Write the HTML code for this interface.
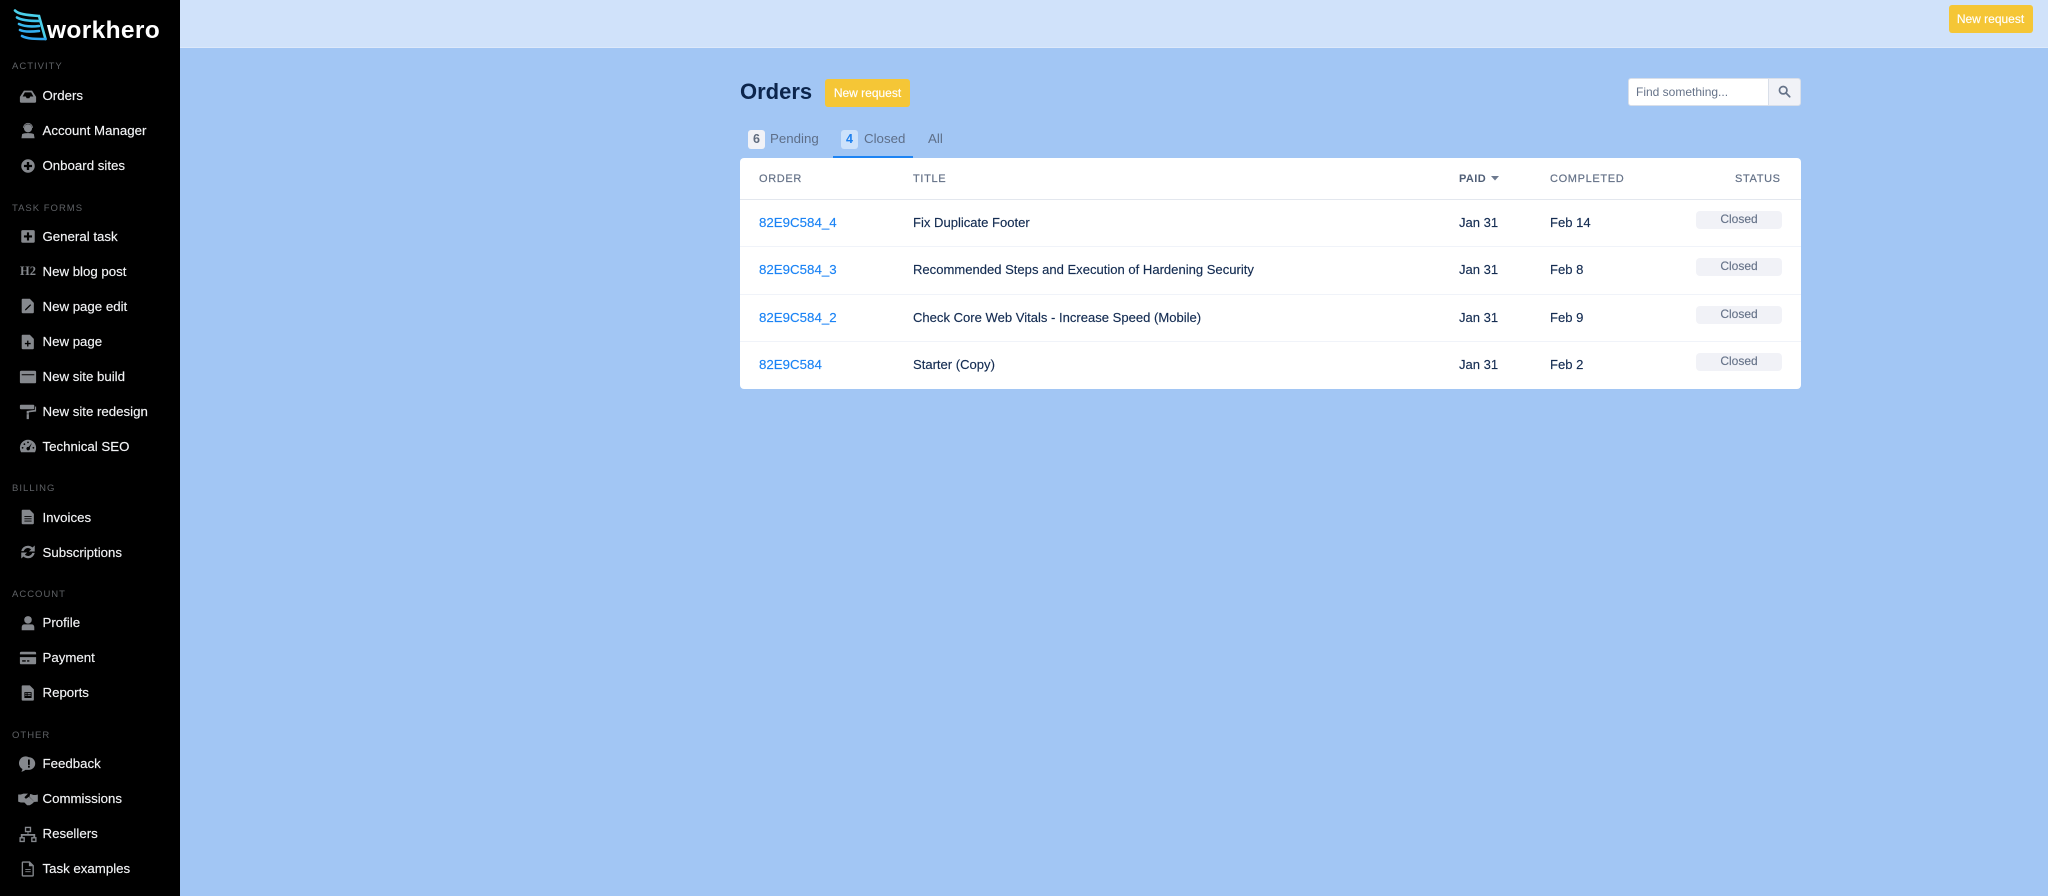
<!DOCTYPE html>
<html><head><meta charset="utf-8"><title>Orders</title>
<style>
*{box-sizing:border-box}
html,body{margin:0;padding:0;width:2048px;height:896px;overflow:hidden;background:#a2c6f4;font-family:"Liberation Sans",sans-serif}
#o{position:absolute;left:0;top:0;width:2048px;height:896px;overflow:hidden;contain:strict}
#w{position:absolute;left:0;top:0;width:2048px;height:896px;filter:blur(.35px)}
.t{position:absolute;white-space:nowrap;line-height:20px;height:20px}
#side{position:absolute;left:-8px;top:-8px;width:187.500px;height:912px;background:#000}
#sc{position:absolute;left:8px;top:8px;width:179px;height:896px}
#top{position:absolute;left:170px;top:-8px;width:1888px;height:56px;background:#d0e2fa;border-bottom:1px solid #dde9fa}
.sec{left:12px;font-size:9.500px;letter-spacing:1px;color:#5f6266;margin-top:2px}
.it{left:42.500px;font-size:13.250px;color:#f2f3f5;-webkit-text-stroke:.15px #f2f3f5}
.ic{position:absolute;left:18px;width:20px;height:20px;fill:#85888d;transform:scale(.9)}
.btn{position:absolute;background:#f5c636;color:#fff;font-size:12px;border-radius:3px;text-align:center;line-height:28px;height:28px;width:85px;-webkit-text-stroke:.15px #fff}
#card{position:absolute;left:740px;top:158px;width:1061px;height:231px;background:#fff;border-radius:4px}
.h{font-size:11px;letter-spacing:.65px;color:#647187;-webkit-text-stroke:.2px #647187;margin-top:.5px}
.c{font-size:13.050px;color:#142c52;-webkit-text-stroke:.15px #142c52}
.l{font-size:13.300px;color:#1a83f5;-webkit-text-stroke:.15px #1a83f5}
.b{position:absolute;left:1696px;width:86px;height:18px;background:#f1f2f7;border-radius:4px;color:#667389;font-size:12px;text-align:center;line-height:16px;-webkit-text-stroke:.15px #667389}
.r{position:absolute;left:740px;width:1061px;height:1px;background:#f0f3f9}
.tb{font-size:13.300px;color:#5e6f89}
</style></head><body><div id="o"><div id="w">
<div id="top"></div>
<div id="side"><div id="sc">
<svg style="position:absolute;left:12px;top:8px" width="36" height="34" viewBox="0 0 36 34" fill="none" stroke-linecap="round" stroke-width="2.600"><path stroke="#4bd0ea" d="M3 2.500C6 6 14 7 27 8L33.500 31"/><path stroke="#3fc4ec" d="M5 9.500C9 12 17 13 27 13"/><path stroke="#38b8ee" d="M7 16C11 18 18 19 27 18"/><path stroke="#32aef0" d="M8 22C12 24 18 24 27 23"/><path stroke="#2ea6f0" d="M10 28C15 31 24 31 33.500 31"/></svg>
<div class="t" style="left:47px;top:18px;height:26px;line-height:26px;font-size:24.500px;font-weight:bold;color:#fff;letter-spacing:.35px">workhero</div>

<div class="t sec" style="top:55px">ACTIVITY</div>
<svg class="ic" style="top:86px" viewBox="0 0 20 20"><path d="M5.500 4h9L19 11v5a1.500 1.500 0 0 1-1.500 1.500h-15A1.500 1.500 0 0 1 1 16v-5zM6.500 6 4 10.500h3.500l1 2h3l1-2H16L13.500 6z"/></svg>
<div class="t it" style="top:86px">Orders</div>
<svg class="ic" style="top:121px" viewBox="0 0 20 20"><circle cx="10" cy="7" r="4.500"/><path d="M4.500 6.500a5.500 5.500 0 0 1 11 0h-1a4.500 4.500 0 0 0-9 0zM3.500 13.500c2-1.500 11-1.500 13 0l.8 4.500H2.700z"/></svg>
<div class="t it" style="top:121px">Account Manager</div>
<svg class="ic" style="top:156px" viewBox="0 0 20 20"><path fill-rule="evenodd" d="M10 2.500a7.500 7.500 0 1 1 0 15 7.500 7.500 0 0 1 0-15zM8.700 5.500v3.200H5.500v2.600h3.200v3.200h2.600v-3.200h3.200V8.700h-3.200V5.500z"/></svg>
<div class="t it" style="top:156px">Onboard sites</div>

<div class="t sec" style="top:197px">TASK FORMS</div>
<svg class="ic" style="top:226px" viewBox="0 0 20 20"><path fill-rule="evenodd" d="M4 3.500h12a1.500 1.500 0 0 1 1.500 1.500v11a1.500 1.500 0 0 1-1.500 1.500H4A1.500 1.500 0 0 1 2.500 16V5A1.500 1.500 0 0 1 4 3.500zM8.800 6v3.300H5.500v2.400h3.300V15h2.400v-3.300h3.300V9.300h-3.300V6z"/></svg>
<div class="t it" style="top:226.500px">General task</div>
<div class="t" style="left:20px;top:261px;font-family:'Liberation Serif',serif;font-weight:bold;font-size:12.500px;color:#85888d">H2</div>
<div class="t it" style="top:261.500px">New blog post</div>
<svg class="ic" style="top:296px" viewBox="0 0 20 20"><path fill-rule="evenodd" d="M4 2h8l4.500 4.500V17a1 1 0 0 1-1 1H4a1 1 0 0 1-1-1V3a1 1 0 0 1 1-1zM12.500 8 7 13.500 6.500 15l1.500-.5L13.500 9z"/></svg>
<div class="t it" style="top:296.500px">New page edit</div>
<svg class="ic" style="top:332px" viewBox="0 0 20 20"><path fill-rule="evenodd" d="M4 2h8l4.500 4.500V17a1 1 0 0 1-1 1H4a1 1 0 0 1-1-1V3a1 1 0 0 1 1-1zM9 8.500v2.500H6.500v1.500H9V15h1.500v-2.500H13V11h-2.500V8.500z"/></svg>
<div class="t it" style="top:332px">New page</div>
<svg class="ic" style="top:367px" viewBox="0 0 20 20"><path fill-rule="evenodd" d="M2.500 3h15A1.500 1.500 0 0 1 19 4.500v11a1.500 1.500 0 0 1-1.500 1.500h-15A1.500 1.500 0 0 1 1 15.500v-11A1.500 1.500 0 0 1 2.500 3zM3 7v1h14V7z"/></svg>
<div class="t it" style="top:367px">New site build</div>
<svg class="ic" style="top:401px" viewBox="0 0 20 20"><path d="M2 3h14a1 1 0 0 1 1 1v3a1 1 0 0 1-1 1H2a1 1 0 0 1-1-1V4a1 1 0 0 1 1-1zM18 5h1v5.500l-8 1V13h-2.500v-3l9-1.200zM8.500 13.500H11V19H8.500z"/></svg>
<div class="t it" style="top:401.500px">New site redesign</div>
<svg class="ic" style="top:436px" viewBox="0 0 20 20"><path fill-rule="evenodd" d="M10 3a9 9 0 0 1 9 9c0 1.800-.5 3.500-1.300 5H2.300A9.500 9.500 0 0 1 1 12a9 9 0 0 1 9-9zM14.500 6.500 10.800 11a2 2 0 1 0 1.200 1zM4 11a1 1 0 1 0 0 2 1 1 0 0 0 0-2zM6 7a1 1 0 1 0 0 2 1 1 0 0 0 0-2zM10 5a1 1 0 1 0 0 2 1 1 0 0 0 0-2zM16 11a1 1 0 1 0 0 2 1 1 0 0 0 0-2z"/></svg>
<div class="t it" style="top:436.500px">Technical SEO</div>

<div class="t sec" style="top:477px">BILLING</div>
<svg class="ic" style="top:507px" viewBox="0 0 20 20"><path fill-rule="evenodd" d="M4 2h8l4.500 4.500V17a1 1 0 0 1-1 1H4a1 1 0 0 1-1-1V3a1 1 0 0 1 1-1zM6 9v1h8V9zM6 11.500v1h8v-1zM6 14v1h8v-1z"/></svg>
<div class="t it" style="top:507.500px">Invoices</div>
<svg class="ic" style="top:542px" viewBox="0 0 20 20"><path d="M10 3c2 0 3.800.8 5 2l2.500-2.200V9.500H11l2.500-2.400A5 5 0 0 0 5.200 9H2.500A7.500 7.500 0 0 1 10 3zM10 17c-2 0-3.800-.8-5-2l-2.500 2.200V10.500H9l-2.500 2.400A5 5 0 0 0 14.800 11h2.700A7.500 7.500 0 0 1 10 17z"/></svg>
<div class="t it" style="top:542.500px">Subscriptions</div>

<div class="t sec" style="top:583px">ACCOUNT</div>
<svg class="ic" style="top:613px" viewBox="0 0 20 20"><circle cx="10" cy="6.500" r="4.200"/><path d="M6 11.500h8c2 0 3 1.500 3 3.500v3H3v-3c0-2 1-3.500 3-3.500z"/></svg>
<div class="t it" style="top:613px">Profile</div>
<svg class="ic" style="top:648px" viewBox="0 0 20 20"><path fill-rule="evenodd" d="M2.500 3h15A1.500 1.500 0 0 1 19 4.500V6H1V4.500A1.500 1.500 0 0 1 2.500 3zM1 9h18v6.500a1.500 1.500 0 0 1-1.500 1.500h-15A1.500 1.500 0 0 1 1 15.500zM3.500 12.500v1.500h4v-1.500zM9 12.500v1.500h2.500v-1.500z"/></svg>
<div class="t it" style="top:648px">Payment</div>
<svg class="ic" style="top:683px" viewBox="0 0 20 20"><path fill-rule="evenodd" d="M4 1.500h8l4.500 4.500v11.500a1 1 0 0 1-1 1H4a1 1 0 0 1-1-1v-15a1 1 0 0 1 1-1zM6 9v6.500h8V9zM7 10h1.500v1H7zM9.500 10H13v1H9.500zM7 12h1.500v1H7zM9.500 12H13v1H9.500z"/></svg>
<div class="t it" style="top:683px">Reports</div>

<div class="t sec" style="top:724px">OTHER</div>
<svg class="ic" style="top:754px" viewBox="0 0 20 20"><path fill-rule="evenodd" d="M11 2.500a7 7 0 0 1 0 14H7c-1 1-2.500 1.800-4.500 2 .8-1 1.200-2 1.300-3A7 7 0 0 1 11 2.500zM10 5v6h2V5zM10 12v2h2v-2z"/></svg>
<div class="t it" style="top:754px">Feedback</div>
<svg class="ic" style="top:789px;left:17px;width:22px" viewBox="0 0 22 20"><path d="M0 5h3l3-1h5L7.500 7.500c-.8 1 .5 2.500 2 1.800L12 7.500l6 5.500-1.500 1.500-.7.600-1.500 1-1.500.8H10l-3-3H3l-3-1zM14 4.500l3 1h2.500L22 5v8h-2.500l-1 .5-6-6 1-3z"/></svg>
<div class="t it" style="top:789px">Commissions</div>
<svg class="ic" style="top:824px;left:17px;width:22px" viewBox="0 0 22 20"><path fill-rule="evenodd" d="M7.500 2h7v6h-3v2H19v3.500h1.500V19h-6v-5.500H17V12H5v1.500h2.500V19h-6v-5.500H3V10h7.500V8h-3zM9 3.500v3h4v-3zM3 15v2.500h3V15zM16 15v2.500h3V15z"/></svg>
<div class="t it" style="top:823.500px">Resellers</div>
<svg class="ic" style="top:859px" viewBox="0 0 20 20"><path fill-rule="evenodd" d="M4.500 1.500H12l4.500 4.500v11a1.500 1.500 0 0 1-1.500 1.500H4.500A1.500 1.500 0 0 1 3 17V3a1.500 1.500 0 0 1 1.500-1.500zM4.500 3v14H15V7h-4V3zM7 10h6v1H7zM7 12.500h6v1H7z"/></svg>
<div class="t it" style="top:859px">Task examples</div>
</div></div>

<div class="btn" style="left:1948.500px;top:5px;width:84px">New request</div>

<div class="t" style="left:740px;top:80px;height:24px;line-height:24px;font-size:22px;font-weight:bold;color:#0c254c">Orders</div>
<div class="btn" style="left:825px;top:79px">New request</div>

<div style="position:absolute;left:748px;top:130px;width:17px;height:19px;background:#f1f2f7;border-radius:3px;color:#5f6b7e;font-size:12.500px;font-weight:bold;text-align:center;line-height:19px">6</div>
<div class="t tb" style="left:770px;top:129px">Pending</div>
<div style="position:absolute;left:841px;top:130px;width:17px;height:19px;background:#cde2fb;border-radius:3px;color:#1e80ee;font-size:12.500px;font-weight:bold;text-align:center;line-height:19px">4</div>
<div class="t tb" style="left:864px;top:129px">Closed</div>
<div class="t tb" style="left:928px;top:129px">All</div>
<div style="position:absolute;left:833px;top:156px;width:80px;height:2px;background:#1e84f3"></div>

<div style="position:absolute;left:1628px;top:78px;width:141px;height:28px;background:#fff;border:1px solid #d9dfe9;border-radius:3px 0 0 3px"></div>
<div class="t" style="left:1636px;top:82px;font-size:12px;color:#667389">Find something...</div>
<div style="position:absolute;left:1768px;top:78px;width:33px;height:28px;background:#f1f2f7;border:1px solid #d9dfe9;border-radius:0 3px 3px 0"></div>
<svg style="position:absolute;left:1778px;top:85px" width="13" height="13" viewBox="0 0 15 15" fill="none" stroke="#667389" stroke-width="2"><circle cx="6" cy="6" r="4.300"/><path stroke-linecap="round" d="M9.500 9.500l4 4"/></svg>

<div id="card"></div>
<div class="r" style="top:199px;background:#e3e7ee"></div>
<div class="r" style="top:246px"></div>
<div class="r" style="top:294px"></div>
<div class="r" style="top:341px"></div>

<div class="t h" style="left:759px;top:168px">ORDER</div>
<div class="t h" style="left:913px;top:168px">TITLE</div>
<div class="t h" style="left:1459px;top:168px;color:#4f5e76;font-weight:bold;letter-spacing:.4px;-webkit-text-stroke:0">PAID</div>
<svg style="position:absolute;left:1491px;top:176px" width="8" height="5"><path d="M0 0h8L4 4.500z" fill="#6d7a8f"/></svg>
<div class="t h" style="left:1550px;top:168px">COMPLETED</div>
<div class="t h" style="left:1735px;top:168px">STATUS</div>

<div class="t l" style="left:759px;top:213px">82E9C584_4</div>
<div class="t c" style="left:913px;top:213px">Fix Duplicate Footer</div>
<div class="t c" style="left:1459px;top:213px">Jan 31</div>
<div class="t c" style="left:1550px;top:213px">Feb 14</div>
<div class="b" style="top:211px">Closed</div>

<div class="t l" style="left:759px;top:260px">82E9C584_3</div>
<div class="t c" style="left:913px;top:260px">Recommended Steps and Execution of Hardening Security</div>
<div class="t c" style="left:1459px;top:260px">Jan 31</div>
<div class="t c" style="left:1550px;top:260px">Feb 8</div>
<div class="b" style="top:258px">Closed</div>

<div class="t l" style="left:759px;top:307.500px">82E9C584_2</div>
<div class="t c" style="left:913px;top:307.500px">Check Core Web Vitals - Increase Speed (Mobile)</div>
<div class="t c" style="left:1459px;top:307.500px">Jan 31</div>
<div class="t c" style="left:1550px;top:307.500px">Feb 9</div>
<div class="b" style="top:306px">Closed</div>

<div class="t l" style="left:759px;top:355px">82E9C584</div>
<div class="t c" style="left:913px;top:355px">Starter (Copy)</div>
<div class="t c" style="left:1459px;top:355px">Jan 31</div>
<div class="t c" style="left:1550px;top:355px">Feb 2</div>
<div class="b" style="top:353px">Closed</div>
</div></div></body></html>
